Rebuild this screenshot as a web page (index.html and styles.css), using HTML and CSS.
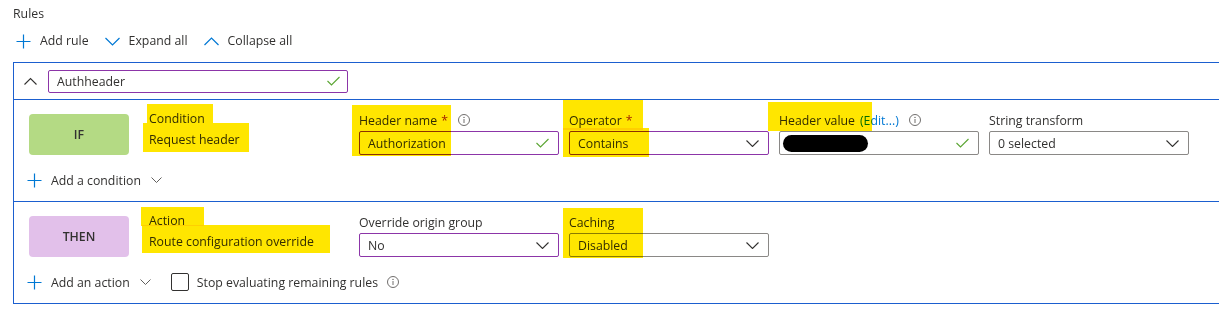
FILE: index.html
```html
<!DOCTYPE html>
<html lang="en">
<head>
<meta charset="utf-8">
<title>Rules</title>
<link rel="stylesheet" href="styles.css">
</head>
<body>
<div class="page">
  <div class="title">Rules</div>
  <div class="toolbar">
    <span class="tb-item first">
      <svg class="tb-icon" viewBox="0 0 15 15"><path d="M7.5 0.5V14.5M0.5 7.5H14.5" /></svg>
      Add rule
    </span>
    <span class="tb-item">
      <svg class="tb-icon" viewBox="0 0 15 15"><path d="M0.5 4L7.5 11L14.5 4" /></svg>
      Expand all
    </span>
    <span class="tb-item">
      <svg class="tb-icon" viewBox="0 0 15 15"><path d="M0.5 11L7.5 4L14.5 11" /></svg>
      Collapse all
    </span>
  </div>

  <div class="rule">
    <div class="rule-head">
      <svg class="head-chev" viewBox="0 0 13 8"><path d="M0.5 7.5L6.5 1.5L12.5 7.5" /></svg>
      <div class="input purple name-input">
        <span class="val">Authheader</span>
        <svg class="check" viewBox="0 0 13 10"><path d="M0.5 5L4.5 9L12.5 1" /></svg>
      </div>
    </div>

    <div class="section">
      <div class="main">
        <div class="badge if">IF</div>
        <div class="summary">
          <div>Condition</div>
          <div>Request header</div>
        </div>
        <div class="fields">
          <div class="field">
            <div class="label"><span>Header name</span><span class="req">*</span><svg class="info" viewBox="0 0 12 12"><circle cx="6" cy="6" r="5.5" /><path d="M6 5V9" /><circle class="dot" cx="6" cy="3.4" r="0.7" /></svg></div>
            <div class="input purple">
              <span class="val">Authorization</span>
              <svg class="check" viewBox="0 0 13 10"><path d="M0.5 5L4.5 9L12.5 1" /></svg>
            </div>
          </div>
          <div class="field">
            <div class="label"><span>Operator</span><span class="req">*</span></div>
            <div class="input purple">
              <span class="val">Contains</span>
              <svg class="chev" viewBox="0 0 13 7"><path d="M0.5 0.5L6.5 6.5L12.5 0.5" /></svg>
            </div>
          </div>
          <div class="field">
            <div class="label"><span>Header value</span><span class="link">(Edit...)</span><svg class="info" viewBox="0 0 12 12"><circle cx="6" cy="6" r="5.5" /><path d="M6 5V9" /><circle class="dot" cx="6" cy="3.4" r="0.7" /></svg></div>
            <div class="input gray">
              <span class="redact"></span>
              <svg class="check" viewBox="0 0 13 10"><path d="M0.5 5L4.5 9L12.5 1" /></svg>
            </div>
          </div>
          <div class="field">
            <div class="label"><span>String transform</span></div>
            <div class="input gray">
              <span class="val">0 selected</span>
              <svg class="chev" viewBox="0 0 13 7"><path d="M0.5 0.5L6.5 6.5L12.5 0.5" /></svg>
            </div>
          </div>
        </div>
      </div>
      <div class="add-row">
        <svg class="add-plus" viewBox="0 0 15 15"><path d="M7.5 0.5V14.5M0.5 7.5H14.5" /></svg>
        <span>Add a condition</span>
        <svg class="small-chev" viewBox="0 0 11 6"><path d="M0.5 0.5L5.5 5.5L10.5 0.5" /></svg>
      </div>
    </div>

    <div class="section">
      <div class="main">
        <div class="badge then">THEN</div>
        <div class="summary">
          <div>Action</div>
          <div>Route configuration override</div>
        </div>
        <div class="fields">
          <div class="field">
            <div class="label"><span>Override origin group</span></div>
            <div class="input purple">
              <span class="val">No</span>
              <svg class="chev" viewBox="0 0 13 7"><path d="M0.5 0.5L6.5 6.5L12.5 0.5" /></svg>
            </div>
          </div>
          <div class="field">
            <div class="label"><span>Caching</span></div>
            <div class="input gray">
              <span class="val">Disabled</span>
              <svg class="chev" viewBox="0 0 13 7"><path d="M0.5 0.5L6.5 6.5L12.5 0.5" /></svg>
            </div>
          </div>
        </div>
      </div>
      <div class="add-row">
        <svg class="add-plus" viewBox="0 0 15 15"><path d="M7.5 0.5V14.5M0.5 7.5H14.5" /></svg>
        <span>Add an action</span>
        <svg class="small-chev" viewBox="0 0 11 6"><path d="M0.5 0.5L5.5 5.5L10.5 0.5" /></svg>
        <span class="checkbox"></span>
        <span class="cb-label">Stop evaluating remaining rules</span>
        <svg class="info" viewBox="0 0 12 12"><circle cx="6" cy="6" r="5.5" /><path d="M6 5V9" /><circle class="dot" cx="6" cy="3.4" r="0.7" /></svg>
      </div>
    </div>
  </div>

  <span class="hl hl-cond"></span>
  <span class="hl hl-req"></span>
  <span class="hl hl-hname"></span>
  <span class="hl hl-op1"></span>
  <span class="hl hl-op2"></span>
  <span class="hl hl-hval"></span>
  <span class="hl hl-action"></span>
  <span class="hl hl-route"></span>
  <span class="hl hl-cache"></span>
</div>
</body>
</html>
```
FILE: styles.css
```css
html, body {
  margin: 0;
  padding: 0;
  background: #ffffff;
  overflow: hidden;
}

body {
  font-family: "Open Sans", "Noto Sans", "Liberation Sans", sans-serif;
  font-size: 12.3px;
  color: #323130;
}

.page {
  position: relative;
  width: 1219px;
  height: 333px;
  box-sizing: border-box;
  padding: 4px 0 0 13px;
  overflow: hidden;
}

.title {
  height: 20px;
  line-height: 20px;
}

.toolbar {
  display: flex;
  align-items: center;
  height: 24px;
  margin-top: 5px;
  gap: 16px;
}

.tb-item {
  display: flex;
  align-items: center;
  gap: 9px;
  line-height: 24px;
}

.tb-item.first {
  margin-left: 3px;
}

.tb-icon {
  width: 15px;
  height: 15px;
  fill: none;
  stroke: #0078d4;
  stroke-width: 1.2;
}

.rule {
  margin-top: 9px;
  width: 1260px;
  border: 1px solid #1b5fcf;
}

.rule-head {
  height: 36px;
  display: flex;
  align-items: center;
  padding-left: 10px;
  gap: 11px;
}

.head-chev {
  width: 13px;
  height: 8px;
  fill: none;
  stroke: #323130;
  stroke-width: 1.1;
}

.input {
  box-sizing: border-box;
  display: flex;
  align-items: center;
  justify-content: space-between;
  width: 200px;
  height: 24px;
  padding: 0 9px 0 8px;
  border: 1px solid #8a8886;
  border-radius: 2px;
  background: #fff;
}

.input.purple {
  border-color: #8c35a8;
}

.input.gray {
  border-color: #8a8886;
}

.name-input {
  width: 300px;
  height: 23px;
  padding-right: 7px;
}

.check {
  width: 13px;
  height: 10px;
  fill: none;
  stroke: #5aa532;
  stroke-width: 1.1;
}

.chev {
  width: 13px;
  height: 7px;
  fill: none;
  stroke: #323130;
  stroke-width: 1.1;
}

.redact {
  display: block;
  width: 85px;
  height: 17px;
  margin-left: -5px;
  border-radius: 9px;
  background: #000;
}

.section {
  border-top: 1px solid #1b5fcf;
  padding: 8px 0 9px 15px;
}

.main {
  display: flex;
  align-items: flex-start;
}

.badge {
  box-sizing: border-box;
  width: 100px;
  height: 41px;
  margin-top: 6px;
  margin-right: 20px;
  border-radius: 4px;
  display: flex;
  align-items: center;
  justify-content: center;
  font-weight: 600;
  color: #323130;
}

.badge.if {
  background: #b4da84;
}

.badge.then {
  background: #e2c0ea;
}

.summary {
  width: 210px;
  line-height: 21px;
}

.fields {
  display: flex;
  gap: 10px;
}

.field {
  margin-top: 2px;
  width: 200px;
}

.label {
  display: flex;
  align-items: center;
  height: 20px;
  margin-bottom: 1px;
  white-space: nowrap;
}

.req {
  color: #a4262c;
  margin-left: 4px;
}

.link {
  color: #0078d4;
  margin-left: 5px;
}

.info {
  width: 12px;
  height: 12px;
  margin-left: 10px;
  fill: none;
  stroke: #605e5c;
  stroke-width: 0.9;
}

.info .dot {
  fill: #605e5c;
  stroke: none;
}

.add-row {
  display: flex;
  align-items: center;
  height: 24px;
  margin-top: 13px;
  margin-left: -2px;
}

.add-plus {
  width: 15px;
  height: 15px;
  margin-right: 9px;
  fill: none;
  stroke: #0078d4;
  stroke-width: 1.2;
}

.small-chev {
  width: 11px;
  height: 6px;
  margin-left: 10px;
  fill: none;
  stroke: #605e5c;
  stroke-width: 1;
}

.checkbox {
  box-sizing: border-box;
  width: 18px;
  height: 18px;
  margin-left: 20px;
  margin-right: 8px;
  border: 1px solid #323130;
  border-radius: 2px;
}

.cb-label + .info {
  margin-left: 9px;
}

.hl {
  position: absolute;
  background: #ffe600;
  mix-blend-mode: multiply;
}

.hl-cond { left: 147px; top: 104px; width: 66px; height: 19px; }
.hl-req { left: 143px; top: 123px; width: 106px; height: 29px; }
.hl-hname { left: 352px; top: 105px; width: 99px; height: 51px; }
.hl-op1 { left: 563px; top: 100px; width: 80px; height: 30px; }
.hl-op2 { left: 563px; top: 128px; width: 86px; height: 29px; }
.hl-hval { left: 768px; top: 102px; width: 104px; height: 29px; }
.hl-action { left: 141px; top: 207px; width: 63px; height: 19px; }
.hl-route { left: 142px; top: 225px; width: 188px; height: 28px; }
.hl-cache { left: 563px; top: 208px; width: 80px; height: 50px; }
```
